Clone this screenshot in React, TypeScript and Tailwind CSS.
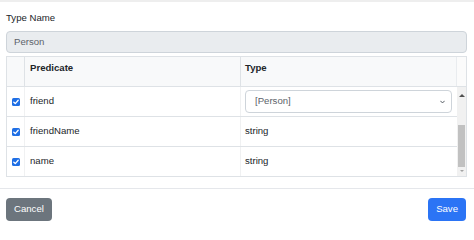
import React from "react";

type Row = { name: string; type: string; select?: boolean };

const rows: Row[] = [
    { name: "friend", type: "[Person]", select: true },
    { name: "friendName", type: "string" },
    { name: "name", type: "string" },
];

function Check() {
    return (
        <span className="flex h-[8px] w-[8px] items-center justify-center rounded-[1.5px] bg-[#1f6fe5]">
            <svg viewBox="0 0 8 8" className="h-[8px] w-[8px]">
                <path d="M1.8 4.2 L3.3 5.6 L6.2 2.3" fill="none" stroke="white" strokeWidth="1.3" strokeLinecap="round" strokeLinejoin="round" />
            </svg>
        </span>
    );
}

function Chevron() {
    return (
        <svg viewBox="0 0 8 6" className="h-[4px] w-[5px]">
            <path d="M1 1.5 L4 4.5 L7 1.5" fill="none" stroke="#495057" strokeWidth="1.5" strokeLinecap="round" strokeLinejoin="round" />
        </svg>
    );
}

function Scrollbar() {
    return (
        <div className="flex w-[9px] flex-col items-center bg-[#f1f1f1]">
            <div className="flex h-[10px] w-full items-end justify-center">
                <div className="h-0 w-0 border-x-[3px] border-b-[3px] border-x-transparent border-b-[#505050]" />
            </div>
            <div className="h-[28px]" />
            <div className="h-[42px] w-[7px] bg-[#c1c1c1]" />
            <div className="flex h-[8px] w-full items-center justify-center">
                <div className="h-0 w-0 border-x-[2px] border-t-[2px] border-x-transparent border-t-[#a3a3a3]" />
            </div>
        </div>
    );
}

export default function App() {
    return (
        <div className="h-[228px] w-[474px] overflow-hidden bg-white font-['Liberation_Sans',Arial,sans-serif] text-[9.6px] text-[#212529]">
            <div className="h-[2px] bg-[#eeeeee]" />

            <div className="pl-[6px] pr-[7px] pt-[9px]">
                <label className="block leading-[14px]">Type Name</label>
                <div className="mt-[6px] flex h-[22px] items-center rounded-[4px] border border-[#ced4da] bg-[#e9ecef] px-[7px] text-[#5c636a]">
                    Person
                </div>

                {/* predicates table */}
                <div className="mt-[3px] border border-[#dee2e6]">
                    <div className="flex h-[30px] border-b border-[#dee2e6] bg-[#f8f9fa] font-bold">
                        <div className="w-[18px] border-r border-[#dee2e6]" />
                        <div className="w-[216px] border-r border-[#dee2e6] pl-[5px] pt-[4px] leading-[14px]">Predicate</div>
                        <div className="w-[215px] pl-[4px] pt-[4px] leading-[14px]">Type</div>
                        <div className="flex-1 border-l border-[#e9ecef] bg-[#fbfbfb]" />
                    </div>
                    <div className="flex">
                        <div className="flex-1">
                            {rows.map((r, i) => (
                                <div
                                    key={r.name}
                                    className={`flex ${i < rows.length - 1 ? "h-[30px] border-b border-[#dee2e6]" : "h-[29px]"}`}
                                >
                                    <div className="flex w-[18px] items-center justify-center border-r border-[#f0f1f2] pl-[1px]">
                                        <Check />
                                    </div>
                                    <div className="flex w-[216px] items-center border-r border-[#f0f1f2] pl-[5px]">{r.name}</div>
                                    <div className="flex flex-1 items-center pl-[4px] pr-[5px]">
                                        {r.select ? (
                                            <div className="flex h-[23px] w-full items-center justify-between rounded-[4px] border border-[#ced4da] bg-white pl-[9px] pr-[6px] text-[#5c636a]">
                                                <span>{r.type}</span>
                                                <Chevron />
                                            </div>
                                        ) : (
                                            r.type
                                        )}
                                    </div>
                                </div>
                            ))}
                        </div>
                        <Scrollbar />
                    </div>
                </div>
            </div>

            <div className="mt-[11px] flex items-center justify-between border-t border-[#e5e7eb] pl-[6px] pr-[8px] pt-[9px]">
                <button className="h-[23px] rounded-[4px] bg-[#6c757d] px-[8px] text-white">Cancel</button>
                <button className="h-[23px] rounded-[4px] bg-[#2b74f5] px-[8px] text-white">Save</button>
            </div>
        </div>
    );
}
